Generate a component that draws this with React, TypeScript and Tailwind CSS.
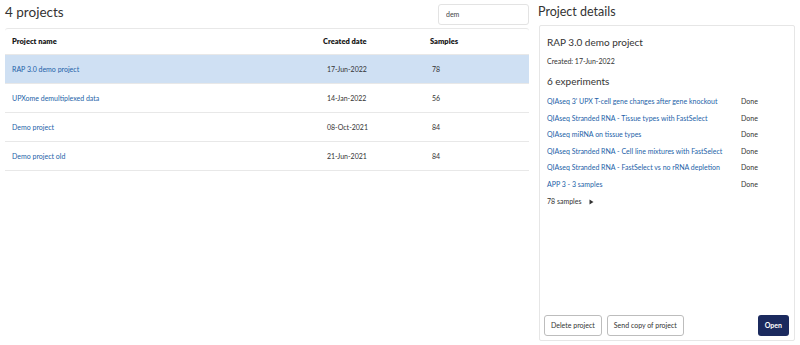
const FONT = "font-['Lato','Liberation_Sans',sans-serif]";

const projects = [
  { name: "RAP 3.0 demo project", date: "17-Jun-2022", samples: 78, selected: true },
  { name: "UPXome demultiplexed data", date: "14-Jan-2022", samples: 56 },
  { name: "Demo project", date: "08-Oct-2021", samples: 84 },
  { name: "Demo project old", date: "21-Jun-2021", samples: 84 },
];

const experiments = [
  "QIAseq 3' UPX T-cell gene changes after gene knockout",
  "QIAseq Stranded RNA - Tissue types with FastSelect",
  "QIAseq miRNA on tissue types",
  "QIAseq Stranded RNA - Cell line mixtures with FastSelect",
  "QIAseq Stranded RNA - FastSelect vs no rRNA depletion",
  "APP 3 - 3 samples",
];

export default function App() {
  return (
    <div className={`${FONT} flex h-[345px] w-[800px] bg-white text-[#333]`}>
      {/* Projects list */}
      <div className="flex w-[538px] flex-col pl-[5px] pr-[9px]">
        <div className="flex h-[28px] items-center justify-between">
          <h1 className="-mt-[3px] text-[13.5px] leading-none text-[#333]">4 projects</h1>
          <input
            value="dem"
            readOnly
            className="h-[21px] w-[91px] rounded-[3px] border border-[#e3e3e3] px-[7px] text-[7px] text-[#444] outline-none"
          />
        </div>
        <div className="rounded-t-[3px] border-t border-[#e8e8e8]">
          <div className="grid h-[26px] grid-cols-[290px_110px_1fr] items-center border-b border-[#e8e8e8] text-[7.5px] font-extrabold text-[#1a1a1a]">
            <span className="pl-[7px]">Project name</span>
            <span className="pl-[28px]">Created date</span>
            <span className="pl-[25px]">Samples</span>
          </div>
          {projects.map((p) => (
            <div
              key={p.name}
              className={
                "grid h-[29px] grid-cols-[290px_110px_1fr] items-center border-b border-[#e8e8e8] text-[7px] " +
                (p.selected ? "bg-[#cfe0f3]" : "")
              }
            >
              <span className="pl-[7px] text-[#1d5fa8]">{p.name}</span>
              <span className="pl-[32px] text-[#333]">{p.date}</span>
              <span className="pl-[27px] text-[#333]">{p.samples}</span>
            </div>
          ))}
        </div>
      </div>

      {/* Project details */}
      <div className="flex w-[262px] flex-col pr-[5px]">
        <h2 className="flex h-[25px] items-center text-[12.5px] leading-none text-[#333]">
          Project details
        </h2>
        <div className="mb-[4px] ml-[1px] flex flex-1 flex-col rounded-[2px] border border-[#e6e6e6] px-[7px]">
          <div className="mt-[9px] text-[10px] leading-[14px] text-[#333]">RAP 3.0 demo project</div>
          <div className="mt-[7px] text-[7px] leading-[10px] text-[#333]">Created: 17-Jun-2022</div>
          <div className="mt-[8px] text-[10px] leading-[14px] text-[#333]">6 experiments</div>
          <div className="mt-[5px] flex flex-col">
            {experiments.map((e) => (
              <div key={e} className="flex h-[16.6px] items-center text-[7px]">
                <span className="w-[194px] text-[#1d5fa8]">{e}</span>
                <span className="text-[#333]">Done</span>
              </div>
            ))}
          </div>
          <div className="mt-[1px] flex h-[16px] items-center gap-[8px] text-[7px] text-[#333]">
            78 samples
            <svg width="5" height="6" viewBox="0 0 5 6">
              <path d="M0.5 0.5 L4.5 3 L0.5 5.5 Z" fill="#333" />
            </svg>
          </div>
          <div className="mt-auto mb-[4px] flex items-center gap-[5px]">
            <button className="-ml-[3px] h-[21px] rounded-[3px] border border-[#bdbdbd] px-[6px] text-[7px] text-[#333]">
              Delete project
            </button>
            <button className="h-[21px] rounded-[3px] border border-[#bdbdbd] px-[6px] text-[7px] text-[#333]">
              Send copy of project
            </button>
            <button className="ml-auto -mr-[2px] h-[21px] rounded-[3px] bg-[#1b2a5e] px-[7px] text-[7px] font-bold text-white">
              Open
            </button>
          </div>
        </div>
      </div>
    </div>
  );
}
